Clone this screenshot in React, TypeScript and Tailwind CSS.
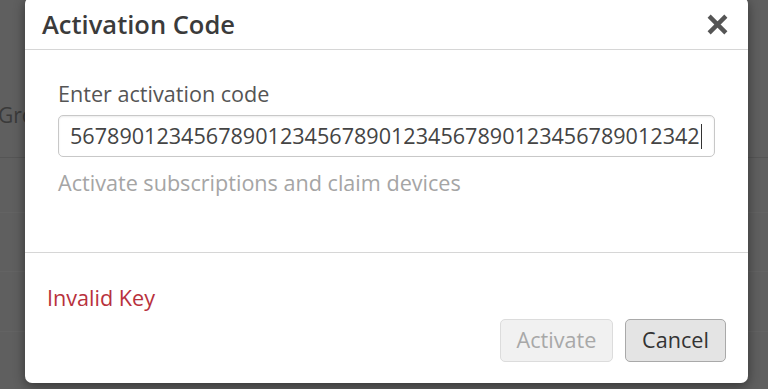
import React from 'react'

const CODE = '567890123456789012345678901234567890123456789012342'

export default function App() {
  return (
    <div className="relative w-[768px] h-[389px] overflow-hidden bg-[#5f5f5f] font-['Open_Sans',sans-serif]">
      {/* page behind the overlay */}
      <div className="flex flex-col pt-[100px]">
        <div className="h-[58px] border-b border-[#555] text-[21px] text-[#3a3a3a] -ml-[2px]">Gro</div>
        <div className="h-[55px] border-b border-[#636363]" />
        <div className="h-[59px] border-b border-[#636363]" />
        <div className="h-[60px] border-b border-[#636363]" />
      </div>

      {/* dialog */}
      <div className="absolute left-[25px] top-[-3px] w-[723px] h-[386px] bg-white rounded-[7px] shadow-[0_3px_12px_rgba(0,0,0,0.45)] flex flex-col">
        <div className="h-[53px] flex items-center justify-between pl-[17px] pr-[19px] border-b border-[#d6d6d6]">
          <h1 className="text-[25.5px] font-semibold text-[#3b3b3b] leading-none pt-[3px]">Activation Code</h1>
          <svg width="23" height="23" viewBox="0 0 22 22" className="mt-[2px]">
            <path d="M3 3 L19 19 M19 3 L3 19" stroke="#555" strokeWidth="4.2" strokeLinecap="butt" />
          </svg>
        </div>

        <div className="h-[203px] border-b border-[#d6d6d6] px-[33px] pt-[29px]">
          <label className="block text-[21.6px] text-[#555] leading-[30px]">Enter activation code</label>
          <div className="mt-[6px] h-[42px] border border-[#c8c8c8] rounded-[5px] shadow-[inset_0_1px_2px_rgba(0,0,0,0.08)] flex items-center pl-[11px] overflow-hidden">
            <span className="text-[21.6px] text-[#444] whitespace-nowrap leading-none">{CODE}</span>
            <span className="w-[1.5px] h-[25px] bg-[#333] ml-[1px]" />
          </div>
          <p className="mt-[11px] text-[21.6px] text-[#a5a5a5] leading-[30px]">Activate subscriptions and claim devices</p>
        </div>

        <div className="flex-1 flex flex-col px-[22px] pt-[30px]">
          <p className="text-[21.6px] text-[#b8313d] leading-[30px]">Invalid Key</p>
          <div className="flex justify-end gap-[12px] mt-[6px]">
            <button disabled className="w-[113px] h-[43px] rounded-[5px] border border-[#dcdcdc] bg-[#f1f1f1] text-[21.6px] text-[#a8a8a8]">Activate</button>
            <button className="w-[101px] h-[43px] rounded-[5px] border border-[#a9a9a9] bg-[#e4e4e4] text-[21.6px] text-[#333]">Cancel</button>
          </div>
        </div>
      </div>
    </div>
  )
}
